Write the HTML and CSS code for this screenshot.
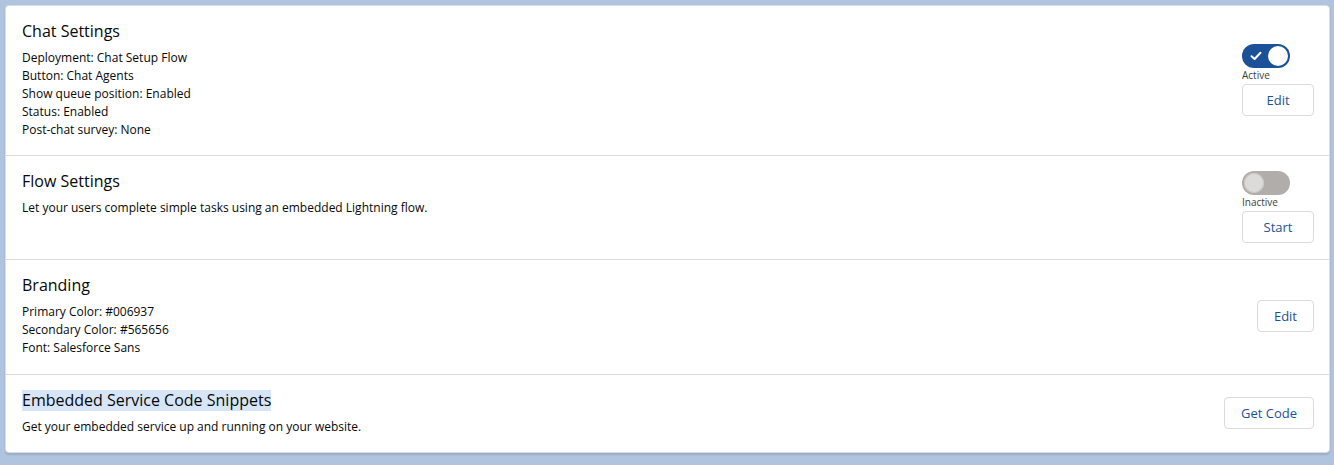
FILE: index.html
```html
<!DOCTYPE html>
<html lang="en">
<head>
<meta charset="utf-8">
<title>Embedded Service Settings</title>
<link rel="stylesheet" href="styles.css">
</head>
<body>
<div class="card">
  <section class="row">
    <div class="info">
      <h2 class="title">Chat Settings</h2>
      <p class="line">Deployment: Chat Setup Flow</p>
      <p class="line">Button: Chat Agents</p>
      <p class="line">Show queue position: Enabled</p>
      <p class="line">Status: Enabled</p>
      <p class="line">Post-chat survey: None</p>
    </div>
    <div class="actions">
      <div class="toggle on"><span class="check"><svg width="12" height="10" viewBox="0 0 12 10"><path d="M1.5 5.2 L4.6 8 L10.5 1.8" fill="none" stroke="#fff" stroke-width="2" stroke-linecap="round" stroke-linejoin="round"/></svg></span><span class="knob"></span></div>
      <div class="status">Active</div>
      <button class="btn wide">Edit</button>
    </div>
  </section>
  <section class="row">
    <div class="info">
      <h2 class="title">Flow Settings</h2>
      <p class="line">Let your users complete simple tasks using an embedded Lightning flow.</p>
    </div>
    <div class="actions">
      <div class="toggle off"><span class="knob"></span></div>
      <div class="status">Inactive</div>
      <button class="btn wide">Start</button>
    </div>
  </section>
  <section class="row roomy">
    <div class="info">
      <h2 class="title">Branding</h2>
      <p class="line">Primary Color: #006937</p>
      <p class="line">Secondary Color: #565656</p>
      <p class="line">Font: Salesforce Sans</p>
    </div>
    <div class="actions">
      <button class="btn">Edit</button>
    </div>
  </section>
  <section class="row last">
    <div class="info">
      <h2 class="title"><span class="selected">Embedded Service Code Snippets</span></h2>
      <p class="line">Get your embedded service up and running on your website.</p>
    </div>
    <div class="actions">
      <button class="btn">Get Code</button>
    </div>
  </section>
</div>
</body>
</html>
```

FILE: styles.css
```css
* { box-sizing: border-box; }
html, body { margin: 0; }
body {
  background: #b0c4df;
  padding: 5px 4px 12px 5px;
  font-family: "Open Sans", "Lato", "Liberation Sans", sans-serif;
  color: #080707;
}
.card {
  background: #fff;
  border: 1px solid #d8dde6;
  border-radius: 4px;
  box-shadow: 0 2px 2px rgba(0,0,0,0.12);
}
.row {
  display: flex;
  align-items: flex-start;
  justify-content: space-between;
  padding: 15px 15px 16px 16px;
  border-bottom: 1px solid #dddbda;
}
.row.roomy { padding-bottom: 17px; }
.row.last { border-bottom: none; padding-bottom: 16px; }
.info { display: flex; flex-direction: column; align-items: flex-start; }
.title {
  margin: 0 0 7px 0;
  font-size: 16px;
  font-weight: 400;
  line-height: 21px;
  height: 21px;
}
.selected { background: #d6e5f8; display: inline-block; line-height: 21px; height: 21px; }
.line {
  margin: 0;
  font-size: 12px;
  line-height: 18px;
}
.actions {
  align-self: center;
  display: flex;
  flex-direction: column;
  align-items: flex-start;
}
.toggle {
  position: relative;
  width: 48px;
  height: 24px;
  border-radius: 12px;
}
.toggle.on { background: #1b5297; }
.toggle.off { background: #b0adab; }
.knob {
  position: absolute;
  top: 2px;
  width: 20px;
  height: 20px;
  border-radius: 50%;
}
.toggle.on .knob { right: 2px; background: #fff; }
.toggle.off .knob { left: 2px; background: #dcdbda; box-shadow: 0 0 0 1px #c9c7c5 inset; }
.check {
  position: absolute;
  left: 8px;
  top: 7px;
  line-height: 0;
}
.status {
  font-size: 10px;
  line-height: 14px;
  color: #3e3e3c;
  margin-bottom: 2px;
}
.btn {
  height: 32px;
  padding: 0 16px;
  background: #fff;
  border: 1px solid #dddbda;
  border-radius: 4px;
  font-family: inherit;
  font-size: 13px;
  color: #1b5297;
}
.btn.wide { width: 72px; }
```
